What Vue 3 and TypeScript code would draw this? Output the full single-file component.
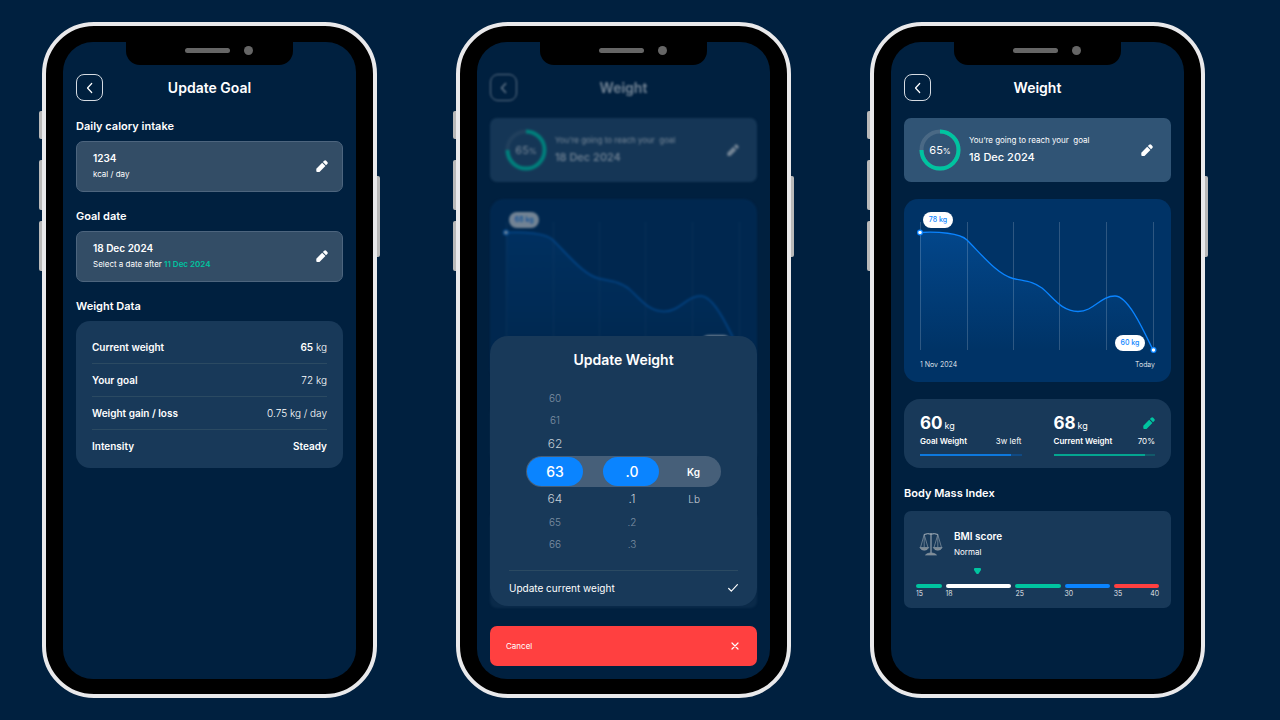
<script setup lang="ts">
import { computed, ref } from 'vue'

interface Screen { id: string; kind: 'goal' | 'weight'; title: string; dimmed: boolean; start: string; end: string }

const screens: Screen[] = [
  { id: 'goal', kind: 'goal', title: 'Update Goal', dimmed: false, start: '', end: '' },
  { id: 'picker', kind: 'weight', title: 'Weight', dimmed: true, start: '68 kg', end: '' },
  { id: 'weight', kind: 'weight', title: 'Weight', dimmed: false, start: '78 kg', end: '60 kg' },
]

const whole = ref(63)
const tenth = ref(0)
const unit = ref<'Kg' | 'Lb'>('Kg')

const wholes = computed(() => [-3, -2, -1, 0, 1, 2, 3].map((d) => ({ value: whole.value + d, d })))
const tenths = computed(() =>
  [-3, -2, -1, 0, 1, 2, 3].map((d) => ({ value: tenth.value + d, d })).filter((t) => t.value >= 0 && t.value <= 9),
)
const units = computed(() => {
  const other: 'Kg' | 'Lb' = unit.value === 'Kg' ? 'Lb' : 'Kg'
  return [{ value: unit.value, d: 0 }, { value: other, d: 1 }]
})

const stats = [
  { value: '60', name: 'Goal Weight', note: '3w left', fill: 90, tone: 'blue', editable: false },
  { value: '68', name: 'Current Weight', note: '70%', fill: 90, tone: 'green', editable: true },
]

const segments = [
  { from: '15', to: '', span: 26, tone: 'green' },
  { from: '18', to: '', span: 67, tone: 'white' },
  { from: '25', to: '', span: 46, tone: 'green' },
  { from: '30', to: '', span: 46, tone: 'blue' },
  { from: '35', to: '40', span: 46, tone: 'red' },
]
const bmiColumns = segments.map((s) => `${s.span}fr`).join(' ')

const pencil =
  'M.3 8.700 6.200 2.700l3.200 3.200-5.900 6H1.200a.9.9 0 0 1-.9-.9zM6.900 2 8.200.8a1.400 1.400 0 0 1 2 0l1.100 1.100a1.400 1.400 0 0 1 0 2L10 5.200z'

const gridX = [16, 63, 109, 155, 202, 249]
const curve =
  'M16 33.500 C34 32.500 56 34 63 41 C78 56 94 76 109 79.500 C122 82.500 128 82 138 89 C150 99 157 112 174 112.500 C190 112.500 196 97 211 97 C224 97 239 130 249 151'
const area = `${curve} L16 151 Z`
</script>

<template>
  <main class="stage">
    <section v-for="s in screens" :key="s.id" class="phone" :aria-label="s.title">
      <i class="key k1"></i><i class="key k2"></i><i class="key k3"></i><i class="key k4"></i>
      <div class="notch"><i class="speaker"></i><i class="lens"></i></div>

      <div class="screen">
        <div class="content" :class="{ dimmed: s.dimmed }">
          <header class="bar">
            <button class="back" type="button" aria-label="Back">
              <svg viewBox="0 0 12 12" width="12" height="12"><path d="M7.700 1.500 3.500 6l4.200 4.500" /></svg>
            </button>
            <h1>{{ s.title }}</h1>
          </header>

          <template v-if="s.kind === 'goal'">
            <h2>Daily calory intake</h2>
            <div class="field">
              <div>
                <strong>1234</strong>
                <span>kcal / day</span>
              </div>
              <button class="edit" type="button" aria-label="Edit calory intake">
                <svg viewBox="0 0 12 12" width="12" height="12"><path :d="pencil" /></svg>
              </button>
            </div>
            <h2>Goal date</h2>
            <div class="field">
              <div>
                <strong>18 Dec 2024</strong>
                <span>Select a date after <b>11 Dec 2024</b></span>
              </div>
              <button class="edit" type="button" aria-label="Edit goal date">
                <svg viewBox="0 0 12 12" width="12" height="12"><path :d="pencil" /></svg>
              </button>
            </div>
            <h2>Weight Data</h2>
            <dl class="data">
              <div><dt>Current weight</dt><dd><b>65</b> kg</dd></div>
              <div><dt>Your goal</dt><dd>72 kg</dd></div>
              <div><dt>Weight gain / loss</dt><dd>0.75 kg / day</dd></div>
              <div><dt>Intensity</dt><dd><b>Steady</b></dd></div>
            </dl>
          </template>

          <template v-else>
            <div class="reach">
              <div class="ring">
                <svg viewBox="0 0 42 42" width="42" height="42">
                  <circle class="track" cx="21" cy="21" r="18.500" />
                  <circle class="arc" cx="21" cy="21" r="18.500" pathLength="100" transform="rotate(-90 21 21)" />
                </svg>
                <span>65<small>%</small></span>
              </div>
              <div class="reach-text">
                <span>You’re going to reach your&nbsp; goal</span>
                <strong>18 Dec 2024</strong>
              </div>
              <button class="edit" type="button" aria-label="Edit goal date">
                <svg viewBox="0 0 12 12" width="12" height="12"><path :d="pencil" /></svg>
              </button>
            </div>

            <div class="chart">
              <svg viewBox="0 0 267 156" role="img" aria-label="Weight over time">
                <defs>
                  <linearGradient :id="'fade-' + s.id" x1="0" y1="0" x2="0" y2="1">
                    <stop offset="0" stop-color="#0a84ff" stop-opacity=".24" />
                    <stop offset="1" stop-color="#0a84ff" stop-opacity="0" />
                  </linearGradient>
                </defs>
                <path :d="area" :fill="`url(#fade-${s.id})`" />
                <line v-for="x in gridX" :key="x" class="rule" :x1="x + 0.5" :x2="x + 0.5" y1="23" y2="151" />
                <path class="curve" :d="curve" />
                <circle class="dot" cx="16" cy="33.500" r="2.400" />
                <circle class="dot" cx="249.500" cy="151" r="2.400" />
              </svg>
              <span class="tag first">{{ s.start }}</span>
              <span class="tag last">{{ s.end }}</span>
              <div class="axis">
                <template v-if="!s.dimmed"><span>1 Nov 2024</span><span>Today</span></template>
              </div>
            </div>

            <div class="stats">
              <template v-if="!s.dimmed">
                <div v-for="st in stats" :key="st.name" class="stat">
                  <div class="line">
                    <span class="amount"><b>{{ st.value }}</b><span>kg</span></span>
                    <button v-if="st.editable" class="edit green-ink" type="button" aria-label="Edit current weight">
                      <svg viewBox="0 0 12 12" width="12" height="12"><path :d="pencil" /></svg>
                    </button>
                  </div>
                  <div class="line names"><b>{{ st.name }}</b><span>{{ st.note }}</span></div>
                  <div class="meter" :class="st.tone"><i :style="{ width: st.fill + '%' }"></i></div>
                </div>
              </template>
            </div>

            <h2><template v-if="!s.dimmed">Body Mass Index</template></h2>
            <div class="bmi">
              <template v-if="!s.dimmed">
                <div class="bmi-head">
                  <svg class="scales" viewBox="0 0 24 24" width="24" height="24">
                    <path class="beam" d="M12 1v20M5 2.500Q9 1 12 2.200 15 1 19 2.500" />
                    <path d="M5.200 2.600 1.500 15.500M5.200 2.600 9 15.500M5.200 2.600V15M18.800 2.600 15 15.500M18.800 2.600l3.700 12.900M18.800 2.600V15" />
                    <path class="pan" d="M.8 15.500h9Q8.500 18.200 5.300 18.200T.8 15.500zM14.200 15.500h9Q22 18.200 18.700 18.200T14.200 15.500zM6.500 23q1-1.500 4.300-2h2.400q3.300.5 4.300 2z" />
                  </svg>
                  <div><strong>BMI score</strong><span>Normal</span></div>
                </div>
                <div class="scale" :style="{ gridTemplateColumns: bmiColumns }">
                  <svg class="marker" viewBox="0 0 7 6" width="7" height="6"><path d="M.5 0h6l.5.5V2L4.700 5.600 4.200 6H2.800l-.5-.4L0 2V.5z" /></svg>
                  <div v-for="g in segments" :key="g.from" class="seg">
                    <i :class="g.tone"></i>
                    <p><span>{{ g.from }}</span><span>{{ g.to }}</span></p>
                  </div>
                </div>
              </template>
            </div>
          </template>
        </div>

        <div v-if="s.dimmed" class="overlay">
          <div class="sheet" role="dialog" aria-label="Update Weight">
            <h1>Update Weight</h1>
            <div class="picker">
              <div class="band"></div>
              <button v-for="w in wholes" :key="'w' + w.value" type="button" :class="['c1', 'r' + (w.d + 4), { on: w.d === 0 }]" :aria-pressed="w.d === 0" @click="whole = w.value">{{ w.value }}</button>
              <button v-for="t in tenths" :key="'t' + t.value" type="button" :class="['c2', 'r' + (t.d + 4), { on: t.d === 0 }]" :aria-pressed="t.d === 0" @click="tenth = t.value">.{{ t.value }}</button>
              <button v-for="u in units" :key="u.value" type="button" :class="['c3', 'r' + (u.d + 4), { on: u.d === 0 }]" :aria-pressed="u.d === 0" @click="unit = u.value">{{ u.value }}</button>
            </div>
            <button class="confirm" type="button">
              Update current weight
              <svg viewBox="0 0 10 10" width="10" height="10"><path d="M.7 5.500 3.300 8.200 9.400 1.700" /></svg>
            </button>
          </div>
          <button class="cancel" type="button">
            Cancel
            <svg viewBox="0 0 8 8" width="8" height="8"><path d="m1 1 6 6M7 1 1 7" /></svg>
          </button>
        </div>
      </div>
    </section>
  </main>
</template>

<style>
body {
  background: #00203f;
}
</style>

<style scoped>
* {
  box-sizing: border-box;
}
.stage {
  position: relative;
  z-index: 0;
  min-height: 100vh;
  padding: 22px 75px 22px 42px;
  display: grid;
  grid-template-columns: repeat(3, 1fr);
  gap: 79px;
  background: #00203f;
  color: #fff;
  font-family: Inter, "Liberation Sans", sans-serif;
  font-size: 10px;
  line-height: 16px;
}
h1,
h2,
p,
dl,
dd {
  margin: 0;
}
b,
strong {
  font-weight: 600;
}
button {
  margin: 0;
  padding: 0;
  border: 0;
  background: none;
  color: inherit;
  font: inherit;
  cursor: pointer;
}
svg {
  display: block;
}
.phone {
  position: relative;
  display: flex;
  padding: 16px 17px 15px;
  border: 4px solid #e9e9eb;
  border-radius: 52px;
  background: #000;
}
.key {
  position: absolute;
  z-index: -1;
  width: 6px;
  background: #b9b9b9;
}
.k1,
.k2,
.k3 {
  left: -7px;
  border-radius: 2px 0 0 2px;
}
.k1 {
  top: 85px;
  height: 28px;
}
.k2 {
  top: 134px;
  height: 50px;
}
.k3 {
  top: 195px;
  height: 50px;
}
.k4 {
  right: -7px;
  top: 150px;
  height: 81px;
  border-radius: 0 2px 2px 0;
}
.notch {
  position: absolute;
  z-index: 2;
  top: 16px;
  left: 50%;
  width: 167px;
  height: 23px;
  margin-left: -84px;
  border-radius: 0 0 14px 14px;
  background: #000;
}
.speaker,
.lens {
  position: absolute;
  background: #666;
}
.speaker {
  left: 59px;
  top: 6px;
  width: 45px;
  height: 5px;
  border-radius: 3px;
}
.lens {
  left: 118px;
  top: 4px;
  width: 9px;
  height: 9px;
  border-radius: 50%;
}
.screen {
  position: relative;
  flex: 1;
  min-width: 0;
  border-radius: 30px;
  background: #00203f;
  overflow: hidden;
}
.content {
  padding: 32px 13px 13px;
}
.bar {
  display: grid;
  grid-template-columns: 27px 1fr 27px;
  align-items: center;
  margin-bottom: 17px;
}
h1 {
  font-size: 14px;
  font-weight: 600;
  line-height: 20px;
  text-align: center;
}
h2 {
  min-height: 16px;
  font-size: 11px;
  font-weight: 600;
  line-height: 16px;
}
.back {
  display: grid;
  place-items: center;
  height: 27px;
  border: 1px solid #d5dbe2;
  border-radius: 8px;
}
.back svg,
.confirm svg,
.cancel svg {
  fill: none;
  stroke: #fff;
  stroke-width: 1.2;
  stroke-linecap: round;
  stroke-linejoin: round;
}
.edit {
  fill: #fff;
}
.green-ink {
  fill: #00c4a0;
}
.field {
  display: flex;
  justify-content: space-between;
  align-items: center;
  margin: 7px 0 16px;
  padding: 8px 14px 9px 16px;
  border: 1px solid #4d657e;
  border-radius: 7px;
  background: #334d66;
}
.field strong,
.field span {
  display: block;
}
.field span {
  font-size: 8px;
}
.field b {
  color: #00c4a0;
}
.data {
  margin-top: 7px;
  padding: 10px 16px 5px;
  border-radius: 14px;
  background: #183959;
}
.data div {
  display: flex;
  justify-content: space-between;
  align-items: center;
  height: 33px;
  border-bottom: 1px solid #2b4a62;
}
.data div:last-child {
  border-color: transparent;
}
.data dt {
  font-weight: 600;
}
.data dd {
  font-weight: 300;
}
.reach {
  display: flex;
  align-items: center;
  height: 64px;
  padding: 0 18px 0 15px;
  border-radius: 7px;
  background: #305475;
}
.ring {
  position: relative;
  margin-right: 8px;
}
.ring circle {
  fill: none;
  stroke-width: 4;
}
.track {
  stroke: #4a6985;
}
.ring .arc {
  stroke: #00c4a0;
  stroke-dasharray: 75 25;
}
.ring span {
  position: absolute;
  inset: 0;
  display: grid;
  grid-auto-flow: column;
  place-content: center;
  align-items: baseline;
  font-size: 11px;
}
.ring small {
  font-size: 8px;
}
.reach-text {
  flex: 1;
  display: grid;
  gap: 1px;
  padding-bottom: 3px;
}
.reach-text span {
  font-size: 8px;
}
.reach-text strong {
  font-size: 11px;
  font-weight: 500;
}
.chart {
  position: relative;
  margin: 17px 0;
  padding-bottom: 9px;
  border-radius: 14px;
  background: #003366;
}
.chart svg {
  width: 100%;
}
.rule {
  stroke: #fff;
  stroke-opacity: 0.18;
}
.curve {
  fill: none;
  stroke: #0a84ff;
  stroke-width: 1.3;
}
.dot {
  fill: #fff;
  stroke: #0a84ff;
  stroke-width: 1.2;
}
.tag {
  position: absolute;
  width: 30px;
  height: 16px;
  border-radius: 8px;
  background: #fff;
  color: #0a84ff;
  font-size: 7px;
  font-weight: 500;
  text-align: center;
}
.first {
  left: 19px;
  top: 13px;
}
.last {
  right: 26px;
  bottom: 31px;
}
.axis {
  display: flex;
  justify-content: space-between;
  min-height: 18px;
  padding: 2px 16px 0;
  font-size: 7px;
  font-weight: 300;
}
.stats {
  display: grid;
  grid-template-columns: 1fr 1fr;
  gap: 32px;
  min-height: 69px;
  margin-bottom: 17px;
  padding: 14px 16px 12px;
  border-radius: 16px;
  background: #183959;
}
.line {
  display: flex;
  justify-content: space-between;
  align-items: center;
  height: 20px;
}
.amount {
  display: flex;
  align-items: baseline;
  gap: 2px;
  padding-top: 2px;
  font-size: 9px;
}
.amount b {
  font-size: 17px;
  font-weight: 700;
}
.names {
  height: 16px;
  font-size: 8px;
}
.meter {
  height: 2px;
  margin-top: 5px;
}
.meter i {
  display: block;
  height: 2px;
}
.meter.blue {
  background: #104a84;
}
.meter.blue i {
  background: #0d78dd;
}
.meter.green {
  background: #125a6a;
}
.meter.green i {
  background: #04a590;
}
.bmi {
  min-height: 97px;
  margin-top: 10px;
  padding: 17px 12px 8px;
  border-radius: 7px;
  background: #183959;
}
.bmi-head {
  display: flex;
  align-items: center;
  gap: 11px;
  padding-left: 3px;
}
.bmi-head div {
  display: grid;
}
.bmi-head span {
  font-size: 8px;
}
.scales {
  fill: none;
  stroke: #8797a5;
  stroke-width: 0.7;
}
.beam {
  stroke: #a9b4bd;
  stroke-width: 1;
}
.pan {
  fill: #7f8a92;
}
.scale {
  position: relative;
  display: grid;
  gap: 4px;
  padding-top: 23px;
}
.marker {
  position: absolute;
  left: 58px;
  top: 8px;
  fill: #00c4a0;
}
.seg i {
  display: block;
  height: 4px;
  margin-top: 1px;
  border-radius: 2px;
}
.seg p {
  display: flex;
  justify-content: space-between;
  font-size: 7px;
  font-weight: 300;
  line-height: 12px;
}
i.green {
  background: #00c4a0;
}
i.white {
  background: #fff;
}
i.blue {
  background: #0a84ff;
}
i.red {
  background: #ff4040;
}
.dimmed {
  opacity: 0.45;
  filter: blur(1px);
}
.dimmed .arc {
  stroke: #00f5c8;
}
.dimmed .curve {
  stroke-width: 1.6;
  stroke-opacity: 0.8;
}
.dimmed .rule {
  stroke-opacity: 0.08;
}
.overlay {
  position: absolute;
  inset: 0;
  display: flex;
  flex-direction: column;
  justify-content: flex-end;
  gap: 20px;
  padding: 13px;
}
.sheet {
  padding: 14px 19px 1px;
  border-radius: 18px;
  background: #183959;
}
.picker {
  display: grid;
  grid-template-columns: 58px 58px 1fr;
  grid-template-rows: 22px 22px 25px 31px 24px 22px 22px;
  column-gap: 18px;
  margin: 17px 17px 15px;
}
.picker button {
  color: #7c8fa2;
  font-weight: 300;
}
.band {
  grid-area: 4 / 1 / 5 / 4;
  border-radius: 16px;
  background: #465f79;
}
.picker .c1 {
  grid-column: 1;
}
.picker .c2 {
  grid-column: 2;
  padding-left: 2px;
}
.picker .c3 {
  grid-column: 3;
  padding-right: 21px;
  text-align: right;
}
.r1 {
  grid-row: 1;
}
.r2 {
  grid-row: 2;
}
.r3 {
  grid-row: 3;
}
.r4 {
  grid-row: 4;
}
.r5 {
  grid-row: 5;
}
.r6 {
  grid-row: 6;
}
.r7 {
  grid-row: 7;
}
.picker .r3,
.picker .r5 {
  color: #c5ced6;
  font-size: 12px;
}
.picker .c3.r5 {
  font-size: 10px;
}
.picker .on {
  margin: 1px;
  border-radius: 15px;
  background: #0a84ff;
  color: #fff;
  font-size: 14px;
  font-weight: 500;
}
.picker .c3.on {
  margin: 0;
  background: none;
  font-size: 10px;
  font-weight: 600;
}
.confirm {
  display: flex;
  justify-content: space-between;
  align-items: center;
  width: 100%;
  height: 35px;
  border-top: 1px solid #2b4a62;
}
.cancel {
  display: flex;
  justify-content: space-between;
  align-items: center;
  height: 40px;
  padding: 0 18px 0 16px;
  border-radius: 7px;
  background: #ff4040;
  font-size: 8px;
}
</style>
